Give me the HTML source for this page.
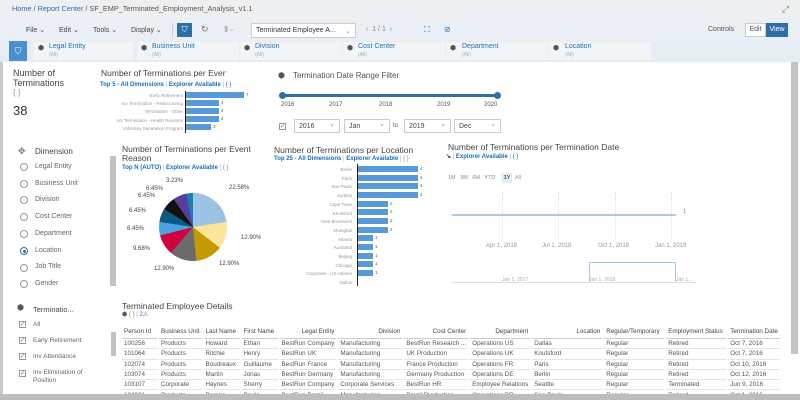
<!DOCTYPE html>
<html><head><meta charset="utf-8"><style>
*{box-sizing:border-box;margin:0;padding:0}
body{width:800px;height:400px;overflow:hidden;background:#fff;font-family:"Liberation Sans",sans-serif;position:relative;color:#333}
.a{position:absolute;white-space:nowrap}
.t{font-size:8.5px;color:#444}
.s{font-size:6px;color:#888}
.b{font-size:6px;color:#1a6fb5;font-weight:bold}
.lbl{font-size:4.5px;color:#999;text-align:right}
.bar{position:absolute;height:6px;background:#5899da}
.n{font-size:4.5px;color:#555}
.rad{position:absolute;width:8px;height:8px;border:1px solid #999;border-radius:50%}
.cb{position:absolute;width:7px;height:7px;border:1px solid #999;font-size:6px;color:#1a6fb5;line-height:6px;text-align:center}
.dd{position:absolute;height:14px;border:1px solid #ccc;font-size:7px;color:#444;padding:3px 4px}
.dd:after{content:"⌄";position:absolute;right:4px;top:0px;color:#888}
table{border-collapse:separate;border-spacing:2px 0;font-size:6.3px;color:#555}
td,th{height:10.3px;border-bottom:1px solid #e4e4e4;padding:0 2px;font-weight:normal;text-align:left}
th{color:#444;height:15px;border-bottom:1px solid #ccc}
</style></head><body>
<!-- header -->
<div class="a" style="left:0;top:0;width:800px;height:20px;background:#eeeff1"></div>
<div class="a" style="left:12px;top:4px;font-size:7.3px;color:#555"><span style="color:#2a6fb5">Home</span> / <span style="color:#2a6fb5">Report Center</span> / SF_EMP_Terminated_Employment_Analysis_v1.1</div>
<div class="a" style="left:782px;top:4px;font-size:9px;color:#777">⤢</div>
<!-- toolbar -->
<div class="a" style="left:0;top:20px;width:800px;height:21px;background:#e9eff5"></div>
<div class="a" style="left:26px;top:26px;font-size:7px;color:#444">File ⌄</div>
<div class="a" style="left:59px;top:26px;font-size:7px;color:#444">Edit ⌄</div>
<div class="a" style="left:93px;top:26px;font-size:7px;color:#444">Tools ⌄</div>
<div class="a" style="left:131px;top:26px;font-size:7px;color:#444">Display ⌄</div>
<div class="a" style="left:172px;top:23px;width:1px;height:14px;background:#ccc"></div>
<div class="a" style="left:177px;top:23px;width:15px;height:14px;background:#2f6fa7;color:#fff;font-size:8px;text-align:center;line-height:14px">⛉</div>
<div class="a" style="left:201px;top:24px;font-size:9px;color:#777">↻</div>
<div class="a" style="left:224px;top:24px;font-size:8px;color:#bbb">▮⌄</div>
<div class="a" style="left:251px;top:23px;width:105px;height:15px;background:#fff;border:1px solid #ccc;font-size:7px;padding:3px 4px;color:#333">Terminated Employee A... <span style="float:right;color:#888">⌄</span></div>
<div class="a" style="left:366px;top:26px;font-size:7px;color:#888">‹ &nbsp;1 / 1 &nbsp;›</div>
<div class="a" style="left:424px;top:25px;font-size:8px;color:#2f6fa7">⛶</div>
<div class="a" style="left:444px;top:25px;font-size:8px;color:#2f6fa7">⊘</div>
<div class="a" style="left:708px;top:26px;font-size:7px;color:#555">Controls</div>
<div class="a" style="left:745px;top:23px;width:21px;height:14px;background:#fff;border:1px solid #ccc;font-size:7px;color:#555;text-align:center;line-height:12px">Edit</div>
<div class="a" style="left:766px;top:23px;width:22px;height:14px;background:#2f6fa7;font-size:7px;color:#fff;text-align:center;line-height:14px">View</div>
<!-- filter bar -->
<div class="a" style="left:0;top:41px;width:800px;height:21px;background:#e6edf4"></div>
<div class="a" style="left:9px;top:41px;width:18px;height:20px;background:#4a8fcf;color:#fff;font-size:9px;text-align:center;line-height:20px">⛉</div>
<div class="a" style="left:33px;top:42px;width:100px;height:18px;background:#f3f4f5"></div>
<div class="a" style="left:137px;top:42px;width:102px;height:18px;background:#f3f4f5"></div>
<div class="a" style="left:240px;top:42px;width:102px;height:18px;background:#f3f4f5"></div>
<div class="a" style="left:343px;top:42px;width:102px;height:18px;background:#f3f4f5"></div>
<div class="a" style="left:446px;top:42px;width:102px;height:18px;background:#f3f4f5"></div>
<div class="a" style="left:549px;top:42px;width:102px;height:18px;background:#f3f4f5"></div>
<div class="a" style="left:38px;top:44px;font-size:7px;color:#555">⬢</div><div class="a" style="left:49px;top:43px;font-size:7px;color:#2a6fb5">Legal Entity</div><div class="a s" style="left:49px;top:52px;font-size:5px;color:#aaa">(All)</div>
<div class="a" style="left:141px;top:44px;font-size:7px;color:#555">⬢</div><div class="a" style="left:152px;top:43px;font-size:7px;color:#2a6fb5">Business Unit</div><div class="a s" style="left:152px;top:52px;font-size:5px;color:#aaa">(All)</div>
<div class="a" style="left:244px;top:44px;font-size:7px;color:#555">⬢</div><div class="a" style="left:255px;top:43px;font-size:7px;color:#2a6fb5">Division</div><div class="a s" style="left:255px;top:52px;font-size:5px;color:#aaa">(All)</div>
<div class="a" style="left:347px;top:44px;font-size:7px;color:#555">⬢</div><div class="a" style="left:358px;top:43px;font-size:7px;color:#2a6fb5">Cost Center</div><div class="a s" style="left:358px;top:52px;font-size:5px;color:#aaa">(All)</div>
<div class="a" style="left:450px;top:44px;font-size:7px;color:#555">⬢</div><div class="a" style="left:462px;top:43px;font-size:7px;color:#2a6fb5">Department</div><div class="a s" style="left:462px;top:52px;font-size:5px;color:#aaa">(All)</div>
<div class="a" style="left:553px;top:44px;font-size:7px;color:#555">⬢</div><div class="a" style="left:565px;top:43px;font-size:7px;color:#2a6fb5">Location</div><div class="a s" style="left:565px;top:52px;font-size:5px;color:#aaa">(All)</div>
<!-- edges -->
<div class="a" style="left:0;top:62px;width:3px;height:338px;background:#c8c8c8"></div>
<div class="a" style="left:791px;top:62px;width:7px;height:292px;background:#c4c4c4"></div>
<div class="a" style="left:0;top:394px;width:800px;height:6px;background:#bdbdbd"></div>
<!-- KPI -->
<div class="a t" style="left:13px;top:68px;font-size:9px;line-height:10px;white-space:normal;width:60px">Number of Terminations</div>
<div class="a" style="left:13px;top:88px;font-size:8px;color:#999">{ }</div>
<div class="a" style="left:13px;top:103px;font-size:13px;color:#333">38</div>
<!-- event reason top chart -->
<div class="a t" style="left:101px;top:68px;width:125px;height:9px;overflow:hidden">Number of Terminations per Event Reason</div>
<div class="a b" style="left:100px;top:82px;font-size:6px">Top 5 - All Dimensions <span style="color:#aaa;font-weight:normal">|</span> Explorer Available <span style="color:#aaa;font-weight:normal">|</span> <span style="font-weight:normal">{ }</span></div>
<div class="a lbl" style="left:80px;top:92px;width:103px;line-height:8.2px">Early Retirement<br>Inv Termination - Restructuring<br>Termination - Other<br>Vol Termination - Health Reasons<br>Voluntary Separation Program</div>
<div class="a" style="left:185px;top:91px;width:1px;height:42px;background:#222"></div>
<div class="bar" style="left:186px;top:92px;width:58px"></div><div class="a n" style="left:246px;top:92px">7</div>
<div class="bar" style="left:186px;top:100px;width:33px"></div><div class="a n" style="left:221px;top:100px">4</div>
<div class="bar" style="left:186px;top:108px;width:33px"></div><div class="a n" style="left:221px;top:108px">4</div>
<div class="bar" style="left:186px;top:116px;width:33px"></div><div class="a n" style="left:221px;top:116px">4</div>
<div class="bar" style="left:186px;top:124px;width:25px"></div><div class="a n" style="left:213px;top:124px">3</div>
<!-- date range filter -->
<div class="a" style="left:278px;top:71px;font-size:8px;color:#555">⬢</div>
<div class="a t" style="left:293px;top:71px;font-size:8px;color:#555">Termination Date Range Filter</div>
<div class="a" style="left:282px;top:94px;width:216px;height:3px;background:#2f6fa7"></div>
<div class="a" style="left:279px;top:92px;width:7px;height:7px;border-radius:50%;background:#2f6fa7"></div>
<div class="a" style="left:494px;top:92px;width:7px;height:7px;border-radius:50%;background:#2f6fa7"></div>
<div class="a" style="left:281px;top:102px;font-size:6px;color:#555">2016</div>
<div class="a" style="left:329px;top:102px;font-size:6px;color:#555">2017</div>
<div class="a" style="left:379px;top:102px;font-size:6px;color:#555">2018</div>
<div class="a" style="left:437px;top:102px;font-size:6px;color:#555">2019</div>
<div class="a" style="left:484px;top:102px;font-size:6px;color:#555">2020</div>
<div class="cb" style="left:279px;top:123px">✓</div>
<div class="dd" style="left:294px;top:119px;width:46px">2016</div>
<div class="dd" style="left:344px;top:119px;width:46px">Jan</div>
<div class="a" style="left:393px;top:123px;font-size:6px;color:#555">to</div>
<div class="dd" style="left:404px;top:119px;width:47px">2019</div>
<div class="dd" style="left:454px;top:119px;width:47px">Dec</div>
<!-- dimension -->
<div class="a" style="left:18px;top:146px;font-size:9px;color:#777">✥</div>
<div class="a t" style="left:35px;top:147px;font-size:8px">Dimension</div>
<div class="rad" style="left:20px;top:163px"></div><div class="a t" style="left:35px;top:163px;font-size:7px;color:#666">Legal Entity</div>
<div class="rad" style="left:20px;top:180px"></div><div class="a t" style="left:35px;top:180px;font-size:7px;color:#666">Business Unit</div>
<div class="rad" style="left:20px;top:196px"></div><div class="a t" style="left:35px;top:196px;font-size:7px;color:#666">Division</div>
<div class="rad" style="left:20px;top:213px"></div><div class="a t" style="left:35px;top:213px;font-size:7px;color:#666">Cost Center</div>
<div class="rad" style="left:20px;top:230px"></div><div class="a t" style="left:35px;top:230px;font-size:7px;color:#666">Department</div>
<div class="rad" style="left:20px;top:247px;border-color:#2f6fa7"><div style="width:3px;height:3px;margin:1.5px;border-radius:50%;background:#2f6fa7"></div></div><div class="a t" style="left:35px;top:247px;font-size:7px;color:#666">Location</div>
<div class="rad" style="left:20px;top:264px"></div><div class="a t" style="left:35px;top:263px;font-size:7px;color:#666">Job Title</div>
<div class="rad" style="left:20px;top:280px"></div><div class="a t" style="left:35px;top:280px;font-size:7px;color:#666">Gender</div>
<div class="a" style="left:110px;top:156px;width:6px;height:130px;background:#c2c2c2"></div>
<!-- pie -->
<div class="a t" style="left:122px;top:145px;white-space:normal;width:160px;line-height:9px">Number of Terminations per Event Reason</div>
<div class="a b" style="left:122px;top:165px">Top N (AUTO) <span style="color:#aaa;font-weight:normal">|</span> Explorer Available <span style="color:#aaa;font-weight:normal">|</span> <span style="color:#888;font-weight:normal">{ }</span></div>
<div class="a" style="left:159px;top:193px;width:68px;height:68px;border-radius:50%;background:conic-gradient(#9cc3e6 0 22.58%,#fde49a 0 35.48%,#c49a00 0 48.38%,#6b6b6b 0 61.28%,#d2003f 0 70.96%,#4aa3df 0 77.41%,#0a5a86 0 83.86%,#111 0 90.31%,#5a3d9a 0 96.76%,#1d7fb8 0 100%)"></div>
<div class="a" style="left:229px;top:185px;font-size:6px;color:#444">22.58%</div>
<div class="a" style="left:241px;top:235px;font-size:6px;color:#444">12.90%</div>
<div class="a" style="left:219px;top:261px;font-size:6px;color:#444">12.90%</div>
<div class="a" style="left:154px;top:266px;font-size:6px;color:#444">12.90%</div>
<div class="a" style="left:133px;top:246px;font-size:6px;color:#444">9.68%</div>
<div class="a" style="left:127px;top:226px;font-size:6px;color:#444">6.45%</div>
<div class="a" style="left:129px;top:208px;font-size:6px;color:#444">6.45%</div>
<div class="a" style="left:138px;top:193px;font-size:6px;color:#444">6.45%</div>
<div class="a" style="left:146px;top:186px;font-size:6px;color:#444">6.45%</div>
<div class="a" style="left:166px;top:178px;font-size:6px;color:#444">3.23%</div>
<!-- location chart -->
<div class="a t" style="left:274px;top:145px">Number of Terminations per Location</div>
<div class="a b" style="left:274px;top:156px">Top 25 - All Dimensions <span style="color:#aaa;font-weight:normal">|</span> Explorer Available <span style="color:#aaa;font-weight:normal">|</span> <span style="color:#888;font-weight:normal">{ }</span></div>
<div class="a lbl" style="left:290px;top:166px;width:62px;line-height:8.7px">Berlin<br>Paris<br>Sao Paulo<br>Sydney<br>Cape Town<br>Knutsford<br>New Brunswick<br>Shanghai<br>Atlanta<br>Auckland<br>Beijing<br>Chicago<br>Corporate - US-Atlanta<br>Dallas</div>
<div class="a" style="left:357px;top:164px;width:1px;height:122px;background:#222"></div>
<div class="bar" style="left:358px;top:166px;width:60px"></div><div class="a n" style="left:420px;top:166px">4</div>
<div class="bar" style="left:358px;top:175px;width:60px"></div><div class="a n" style="left:420px;top:175px">4</div>
<div class="bar" style="left:358px;top:183px;width:60px"></div><div class="a n" style="left:420px;top:183px">4</div>
<div class="bar" style="left:358px;top:192px;width:60px"></div><div class="a n" style="left:420px;top:192px">4</div>
<div class="bar" style="left:358px;top:201px;width:30px"></div><div class="a n" style="left:390px;top:201px">2</div>
<div class="bar" style="left:358px;top:209px;width:30px"></div><div class="a n" style="left:390px;top:209px">2</div>
<div class="bar" style="left:358px;top:218px;width:30px"></div><div class="a n" style="left:390px;top:218px">2</div>
<div class="bar" style="left:358px;top:227px;width:30px"></div><div class="a n" style="left:390px;top:227px">2</div>
<div class="bar" style="left:358px;top:235px;width:15px"></div><div class="a n" style="left:375px;top:235px">1</div>
<div class="bar" style="left:358px;top:244px;width:15px"></div><div class="a n" style="left:375px;top:244px">1</div>
<div class="bar" style="left:358px;top:253px;width:15px"></div><div class="a n" style="left:375px;top:253px">1</div>
<div class="bar" style="left:358px;top:261px;width:15px"></div><div class="a n" style="left:375px;top:261px">1</div>
<div class="bar" style="left:358px;top:270px;width:15px"></div><div class="a n" style="left:375px;top:270px">1</div>
<!-- time chart -->
<div class="a t" style="left:448px;top:142px">Number of Terminations per Termination Date</div>
<div class="a b" style="left:446px;top:153px"><span style="color:#333">↘</span> <span style="color:#aaa;font-weight:normal">|</span> Explorer Available <span style="color:#aaa;font-weight:normal">|</span> <span style="font-weight:normal">{ }</span></div>
<div class="a" style="left:448px;top:175px;font-size:5.5px;color:#888;word-spacing:3px">1M 3M 6M YTD</div>
<div class="a" style="left:502px;top:173px;width:10px;height:10px;background:#e3ecf5;font-size:5.5px;font-weight:bold;color:#555;text-align:center;line-height:10px">1Y</div>
<div class="a" style="left:515px;top:175px;font-size:5.5px;color:#999">All</div>
<div class="a" style="left:502px;top:192px;border-left:1px dotted #ddd;height:48px"></div>
<div class="a" style="left:558px;top:192px;border-left:1px dotted #ddd;height:48px"></div>
<div class="a" style="left:615px;top:192px;border-left:1px dotted #ddd;height:48px"></div>
<div class="a" style="left:671px;top:192px;border-left:1px dotted #ddd;height:48px"></div>
<div class="a" style="left:452px;top:214px;width:224px;height:1.5px;background:#a9c8ea"></div>
<div class="a" style="left:683px;top:209px;font-size:6px;color:#888">1</div>
<div class="a" style="left:486px;top:243px;font-size:6px;color:#999">Apr 1, 2018</div>
<div class="a" style="left:542px;top:243px;font-size:6px;color:#999">Jul 1, 2018</div>
<div class="a" style="left:598px;top:243px;font-size:6px;color:#999">Oct 1, 2018</div>
<div class="a" style="left:655px;top:243px;font-size:6px;color:#999">Jan 1, 2019</div>
<div class="a" style="left:589px;top:262px;width:87px;height:21px;border:1px solid #a9c8ea"></div>
<div class="a" style="left:452px;top:282px;width:244px;height:1px;background:#ddd"></div>
<div class="a" style="left:502px;top:277px;font-size:5px;color:#aaa">Jan 1, 2017</div>
<div class="a" style="left:589px;top:277px;font-size:5px;color:#aaa">Jan 1, 2018</div>
<div class="a" style="left:676px;top:277px;font-size:5px;color:#aaa">Jan 1...</div>
<!-- termination filter -->
<div class="a" style="left:17px;top:303px;font-size:8px;color:#555">⬢</div>
<div class="a t" style="left:33px;top:305px;font-size:7.5px">Terminatio...</div>
<div class="cb" style="left:19px;top:321px">✓</div><div class="a" style="left:33px;top:321px;font-size:6.5px;color:#666">All</div>
<div class="cb" style="left:19px;top:337px">✓</div><div class="a" style="left:33px;top:337px;font-size:6.5px;color:#666">Early Retirement</div>
<div class="cb" style="left:19px;top:353px">✓</div><div class="a" style="left:33px;top:353px;font-size:6.5px;color:#666">Inv Attendance</div>
<div class="cb" style="left:19px;top:370px">✓</div><div class="a" style="left:33px;top:369px;font-size:6.5px;color:#666;line-height:8px">Inv Elimination of<br>Position</div>
<div class="a" style="left:111px;top:332px;width:5px;height:24px;background:#c2c2c2"></div>
<!-- table -->
<div class="a t" style="left:122px;top:301px">Terminated Employee Details</div>
<div class="a" style="left:122px;top:311px;font-size:6px;color:#555">⬢ <span style="color:#888">{ }</span> <span style="color:#aaa">|</span> <span style="color:#2a6fb5">2⚠</span></div>
<div class="a" style="left:120px;top:324px;width:671px;height:70px;overflow:hidden">
<table>
<tr><th style="width:35px">Person Id</th><th style="width:42px">Business Unit</th><th style="width:36px">Last Name</th><th style="width:36px">First Name</th><th style="width:56px;text-align:right">Legal Entity</th><th style="width:64px;text-align:right">Division</th><th style="width:58px;text-align:right">Cost Center</th><th style="width:58px;text-align:right">Department</th><th style="width:70px;text-align:right">Location</th><th style="width:60px">Regular/Temporary</th><th style="width:60px">Employment Status</th><th style="width:40px">Termination Date</th></tr>
<tr><td>100256</td><td>Products</td><td>Howard</td><td>Ethan</td><td>BestRun Company</td><td>Manufacturing</td><td>BestRun Research ...</td><td>Operations US</td><td>Dallas</td><td>Regular</td><td>Retired</td><td>Oct 7, 2016</td></tr>
<tr><td>101064</td><td>Products</td><td>Ritchie</td><td>Henry</td><td>BestRun UK</td><td>Manufacturing</td><td>UK Production</td><td>Operations UK</td><td>Knutsford</td><td>Regular</td><td>Retired</td><td>Oct 7, 2016</td></tr>
<tr><td>102074</td><td>Products</td><td>Boudreaux</td><td>Guillaume</td><td>BestRun France</td><td>Manufacturing</td><td>France Production</td><td>Operations FR</td><td>Paris</td><td>Regular</td><td>Retired</td><td>Oct 10, 2016</td></tr>
<tr><td>103074</td><td>Products</td><td>Martin</td><td>Jonas</td><td>BestRun Germany</td><td>Manufacturing</td><td>Germany Production</td><td>Operations DE</td><td>Berlin</td><td>Regular</td><td>Retired</td><td>Oct 12, 2016</td></tr>
<tr><td>103107</td><td>Corporate</td><td>Haynes</td><td>Sherry</td><td>BestRun Company</td><td>Corporate Services</td><td>BestRun HR</td><td>Employee Relations</td><td>Seattle</td><td>Regular</td><td>Terminated</td><td>Jun 9, 2016</td></tr>
<tr><td>104001</td><td>Products</td><td>Pereira</td><td>Paulo</td><td>BestRun Brazil</td><td>Manufacturing</td><td>Brazil Production</td><td>Operations BR</td><td>Sao Paulo</td><td>Regular</td><td>Retired</td><td>Oct 1, 2016</td></tr>
</table></div>
</body></html>
